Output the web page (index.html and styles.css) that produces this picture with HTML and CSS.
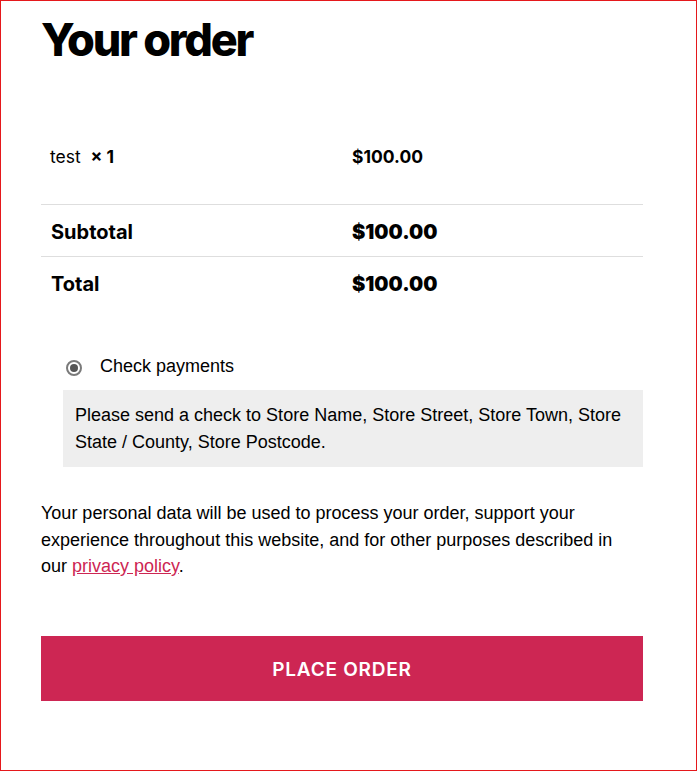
FILE: index.html
```html
<!DOCTYPE html>
<html lang="en">
<head>
<meta charset="utf-8">
<title>Your order</title>
<link rel="stylesheet" href="styles.css">
</head>
<body>
<div class="frame">
  <div class="review">
    <h3 class="review-heading">Your order</h3>
    <table class="order-table">
      <tbody>
        <tr class="item-row">
          <td class="col-name">test&nbsp; <strong class="qty">×&nbsp;1</strong></td>
          <td class="col-total"><strong>$100.00</strong></td>
        </tr>
        <tr class="sum-row">
          <th class="col-name">Subtotal</th>
          <td class="col-total"><strong>$100.00</strong></td>
        </tr>
        <tr class="sum-row last">
          <th class="col-name">Total</th>
          <td class="col-total"><strong>$100.00</strong></td>
        </tr>
      </tbody>
    </table>

    <ul class="methods">
      <li class="method">
        <label class="method-label"><span class="radio"><span class="radio-dot"></span></span>Check payments</label>
        <div class="payment-box">Please send a check to Store Name, Store Street, Store Town, Store State / County, Store Postcode.</div>
      </li>
    </ul>

    <p class="privacy">Your personal data will be used to process your order, support your experience throughout this website, and for other purposes described in our <a class="privacy-link" href="#">privacy policy</a>.</p>

    <button class="place-order" type="button">Place order</button>
  </div>
</div>
</body>
</html>
```

FILE: styles.css
```css
* { box-sizing: border-box; }
html, body { margin: 0; padding: 0; background: #fff; }
.frame {
  width: 697px;
  height: 771px;
  border: 1px solid #e5181c;
  padding: 0 53px 0 40px;
  overflow: hidden;
  font-family: "Liberation Sans", Arial, sans-serif;
  color: #000;
}
.review { width: 602px; }
.review-heading {
  margin: 10px 0 0;
  font-family: Inter, "Noto Sans", sans-serif;
  font-weight: 800;
  font-size: 45px;
  line-height: 58px;
  letter-spacing: -0.05em;
  color: #000;
}
.order-table {
  width: 100%;
  border-collapse: collapse;
  margin-top: 40px;
  font-family: Inter, "Noto Sans", sans-serif;
  table-layout: fixed;
}
.order-table td, .order-table th {
  text-align: left;
  padding: 0 10px;
  width: 50%;
}
.item-row td {
  font-size: 17.5px;
  line-height: 24px;
  height: 95px;
  border-bottom: 1px solid #dedede;
  padding-top: 2px;
}
.item-row .col-name { padding-left: 9px; }
.qty { font-weight: 700; }
.sum-row th, .sum-row td {
  font-size: 20px;
  line-height: 24px;
  height: 52px;
  font-weight: 700;
  border-bottom: 1px solid #dedede;
  padding-top: 4px;
}
.sum-row.last th, .sum-row.last td { border-bottom: none; }
.methods {
  list-style: none;
  margin: 44px 0 0 22px;
  padding: 0;
}
.method-label {
  display: flex;
  align-items: center;
  font-size: 18px;
  line-height: 27px;
  padding-top: 1px;
}
.radio {
  width: 16px;
  height: 16px;
  border: 2px solid #7a7a7a;
  border-radius: 50%;
  display: inline-flex;
  align-items: center;
  justify-content: center;
  margin: 2px 18px 0 3px;
  flex: none;
}
.radio-dot {
  width: 8px;
  height: 8px;
  border-radius: 50%;
  background: #555;
}
.payment-box {
  margin-top: 10px;
  background: #eeeeee;
  padding: 12px 12px 11px;
  font-size: 18px;
  line-height: 27px;
}
.privacy {
  margin: 33px 0 0;
  font-size: 18px;
  line-height: 26.5px;
}
.privacy-link { color: #cd2653; text-decoration: underline; }
.place-order {
  display: block;
  width: 100%;
  height: 65px;
  margin-top: 56px;
  border: none;
  background: #cd2653;
  color: #fff;
  font-family: Inter, "Noto Sans", sans-serif;
  font-weight: 600;
  font-size: 19px;
  letter-spacing: 0.04em;
  text-transform: uppercase;
  padding: 2px 0 0;
}
```
